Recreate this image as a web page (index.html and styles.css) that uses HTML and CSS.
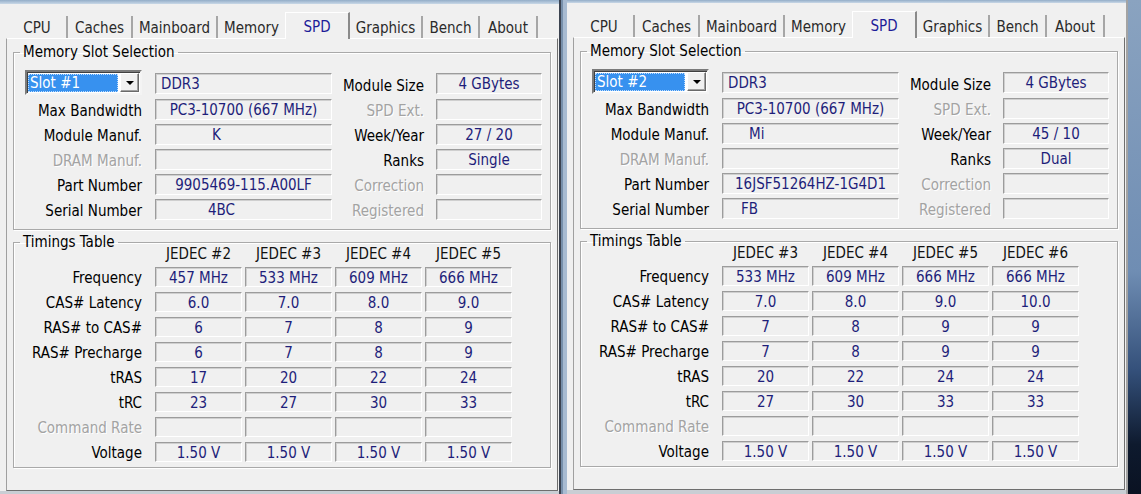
FILE: index.html
```html
<!DOCTYPE html>
<html>
<head>
<meta charset="utf-8">
<title>CPU-Z SPD</title>
<link rel="stylesheet" href="styles.css">
</head>
<body>
<div class="screen">
  <section class="win win-a">
    <div class="topframe"></div>
    <div class="tabs">
      <div class="tab t-cpu">CPU</div>
      <div class="tab t-caches">Caches</div>
      <div class="tab t-main">Mainboard</div>
      <div class="tab t-mem">Memory</div>
      <div class="tab t-spd active">SPD</div>
      <div class="tab t-gfx">Graphics</div>
      <div class="tab t-bench">Bench</div>
      <div class="tab t-about">About</div>
    </div>
    <div class="panel">
      <fieldset class="group g-slot">
        <legend>Memory Slot Selection</legend>
        <div class="slot-grid">
          <div class="combo"><span class="combo-sel">Slot #1</span><span class="combo-btn"><span class="tri"></span></span></div>
          <div class="field lft">DDR3</div>
          <div class="lab low">Module Size</div>
          <div class="field">4 GBytes</div>

          <div class="lab">Max Bandwidth</div>
          <div class="field">PC3-10700 (667 MHz)</div>
          <div class="lab dis">SPD Ext.</div>
          <div class="field"></div>

          <div class="lab">Module Manuf.</div>
          <div class="field lft ind-k">K</div>
          <div class="lab">Week/Year</div>
          <div class="field">27 / 20</div>

          <div class="lab dis">DRAM Manuf.</div>
          <div class="field"></div>
          <div class="lab">Ranks</div>
          <div class="field">Single</div>

          <div class="lab">Part Number</div>
          <div class="field">9905469-115.A00LF</div>
          <div class="lab dis">Correction</div>
          <div class="field"></div>

          <div class="lab">Serial Number</div>
          <div class="field lft ind-4bc">4BC</div>
          <div class="lab dis">Registered</div>
          <div class="field"></div>
        </div>
      </fieldset>
      <fieldset class="group g-tim">
        <legend>Timings Table</legend>
        <div class="tim-grid">
          <div class="hd"></div><div class="hd">JEDEC #2</div><div class="hd">JEDEC #3</div><div class="hd">JEDEC #4</div><div class="hd">JEDEC #5</div>
          <div class="lab">Frequency</div><div class="field">457 MHz</div><div class="field">533 MHz</div><div class="field">609 MHz</div><div class="field">666 MHz</div>
          <div class="lab">CAS# Latency</div><div class="field">6.0</div><div class="field">7.0</div><div class="field">8.0</div><div class="field">9.0</div>
          <div class="lab">RAS# to CAS#</div><div class="field">6</div><div class="field">7</div><div class="field">8</div><div class="field">9</div>
          <div class="lab">RAS# Precharge</div><div class="field">6</div><div class="field">7</div><div class="field">8</div><div class="field">9</div>
          <div class="lab">tRAS</div><div class="field">17</div><div class="field">20</div><div class="field">22</div><div class="field">24</div>
          <div class="lab">tRC</div><div class="field">23</div><div class="field">27</div><div class="field">30</div><div class="field">33</div>
          <div class="lab dis">Command Rate</div><div class="field"></div><div class="field"></div><div class="field"></div><div class="field"></div>
          <div class="lab">Voltage</div><div class="field">1.50 V</div><div class="field">1.50 V</div><div class="field">1.50 V</div><div class="field">1.50 V</div>
        </div>
      </fieldset>
    </div>
    <div class="bottomframe"></div>
  </section>

  <div class="midframe"></div>

  <section class="win win-b">
    <div class="topframe"></div>
    <div class="tabs">
      <div class="tab t-cpu">CPU</div>
      <div class="tab t-caches">Caches</div>
      <div class="tab t-main">Mainboard</div>
      <div class="tab t-mem">Memory</div>
      <div class="tab t-spd active">SPD</div>
      <div class="tab t-gfx">Graphics</div>
      <div class="tab t-bench">Bench</div>
      <div class="tab t-about">About</div>
    </div>
    <div class="panel">
      <fieldset class="group g-slot">
        <legend>Memory Slot Selection</legend>
        <div class="slot-grid">
          <div class="combo"><span class="combo-sel">Slot #2</span><span class="combo-btn"><span class="tri"></span></span></div>
          <div class="field lft">DDR3</div>
          <div class="lab low">Module Size</div>
          <div class="field">4 GBytes</div>

          <div class="lab">Max Bandwidth</div>
          <div class="field">PC3-10700 (667 MHz)</div>
          <div class="lab dis">SPD Ext.</div>
          <div class="field"></div>

          <div class="lab">Module Manuf.</div>
          <div class="field lft ind-mi">Mi</div>
          <div class="lab">Week/Year</div>
          <div class="field">45 / 10</div>

          <div class="lab dis">DRAM Manuf.</div>
          <div class="field"></div>
          <div class="lab">Ranks</div>
          <div class="field">Dual</div>

          <div class="lab">Part Number</div>
          <div class="field">16JSF51264HZ-1G4D1</div>
          <div class="lab dis">Correction</div>
          <div class="field"></div>

          <div class="lab">Serial Number</div>
          <div class="field lft ind-fb">FB</div>
          <div class="lab dis">Registered</div>
          <div class="field"></div>
        </div>
      </fieldset>
      <fieldset class="group g-tim">
        <legend>Timings Table</legend>
        <div class="tim-grid">
          <div class="hd"></div><div class="hd">JEDEC #3</div><div class="hd">JEDEC #4</div><div class="hd">JEDEC #5</div><div class="hd">JEDEC #6</div>
          <div class="lab">Frequency</div><div class="field">533 MHz</div><div class="field">609 MHz</div><div class="field">666 MHz</div><div class="field">666 MHz</div>
          <div class="lab">CAS# Latency</div><div class="field">7.0</div><div class="field">8.0</div><div class="field">9.0</div><div class="field">10.0</div>
          <div class="lab">RAS# to CAS#</div><div class="field">7</div><div class="field">8</div><div class="field">9</div><div class="field">9</div>
          <div class="lab">RAS# Precharge</div><div class="field">7</div><div class="field">8</div><div class="field">9</div><div class="field">9</div>
          <div class="lab">tRAS</div><div class="field">20</div><div class="field">22</div><div class="field">24</div><div class="field">24</div>
          <div class="lab">tRC</div><div class="field">27</div><div class="field">30</div><div class="field">33</div><div class="field">33</div>
          <div class="lab dis">Command Rate</div><div class="field"></div><div class="field"></div><div class="field"></div><div class="field"></div>
          <div class="lab">Voltage</div><div class="field">1.50 V</div><div class="field">1.50 V</div><div class="field">1.50 V</div><div class="field">1.50 V</div>
        </div>
      </fieldset>
    </div>
    <div class="bottomframe"></div>
  </section>

  <div class="rightframe"></div>
</div>
</body>
</html>
```

FILE: styles.css
```css
* { box-sizing: border-box; }

html, body {
  margin: 0;
  padding: 0;
  width: 1141px;
  height: 494px;
  overflow: hidden;
  background: #f0f0f0;
}

body {
  font-family: "DejaVu Sans Condensed", "DejaVu Sans", sans-serif;
  font-stretch: condensed;
  font-size: 15px;
  color: #000;
}

.screen {
  display: flex;
  width: 1141px;
  height: 494px;
}

.win {
  width: 559px;
  height: 494px;
  background: #f0f0f0;
  padding: 0 1px 0 6px;
  display: flex;
  flex-direction: column;
}

.topframe {
  height: 4px;
  margin: 0 -1px 0 -6px;
  background: linear-gradient(#93adc8, #c9d8e7);
}

.win-b .topframe { height: 3px; }

.bottomframe {
  flex: 1;
  margin: 0 -1px 0 -6px;
  background: #c9ced4;
}

.midframe {
  width: 8px;
  height: 494px;
  background: linear-gradient(to right, #3c4350 0 2px, #7890ab 2px 4px, #a8bbd1 4px);
}

.rightframe {
  width: 15px;
  height: 494px;
  background: linear-gradient(#8aa3c0 0%, #6f8db3 55%, #34507a 75%, #0e1a2e 90%, #0a1222 100%);
  border-left: 2px solid #a3a3a3;
}

/* ---------- tabs ---------- */
.tabs {
  display: flex;
  align-items: flex-end;
  height: 34px;
  padding: 8px 0 0 2px;
}

.tab {
  height: 22px;
  line-height: 20px;
  padding-top: 2px;
  text-align: center;
  color: #2a2a2a;
  border-right: 2px solid #a6a6a6;
}

.tab.active {
  height: 27px;
  line-height: 24px;
  padding-top: 2px;
  color: #1c1c98;
  border-top: 1px solid #fff;
  border-left: 1px solid #fff;
  border-right: 2px solid #8a8a8a;
  margin-bottom: -1px;
  background: #f0f0f0;
  position: relative;
  z-index: 1;
}

.t-cpu { width: 60px; }
.t-caches { width: 65px; }
.t-main { width: 85px; }
.t-mem { width: 67px; border-right: none; }
.t-spd { width: 65px; }
.t-gfx { width: 73px; }
.t-bench { width: 57px; }
.t-about { width: 58px; }

/* ---------- panel ---------- */
.panel {
  width: 552px;
  height: 453px;
  border-top: 1px solid #fff;
  border-left: 1px solid #a0a0a0;
  border-right: 1px solid #6e6e6e;
  border-bottom: 1px solid #6e6e6e;
  padding: 0 6px;
}

.group {
  margin: 0;
  padding: 0;
  border: 1px solid #a9a9a9;
  box-shadow: inset 1px 1px 0 #fff, 1px 1px 0 #fff;
  min-width: 0;
}

.group legend {
  margin-left: 6px;
  padding: 0 3px;
  line-height: 14px;
  height: 14px;
}

.g-slot { margin-top: 6px; padding: 11px 0 9px 0; }
.g-tim { margin-top: 5px; padding: 0 0 5px 0; }

/* ---------- slot grid ---------- */
.slot-grid {
  display: grid;
  grid-template-columns: 141px 177px 104px 106px;
  grid-template-rows: 25px repeat(5, 21px);
  row-gap: 4px;
}

.lab {
  text-align: right;
  padding-right: 13px;
  white-space: nowrap;
  align-self: center;
  line-height: 18px;
  padding-top: 2px;
}

.slot-grid .lab:nth-child(4n+3) { padding-right: 12px; }

.lab.low { align-self: end; }

.lab.dis {
  color: #a3a3a3;
  text-shadow: 1px 1px 0 #fff;
}

.field {
  border-top: 1px solid #9c9c9c;
  border-left: 1px solid #9c9c9c;
  border-bottom: 1px solid #fff;
  border-right: 1px solid #fff;
  box-shadow: inset 1px 1px 0 #cfcfcf;
  color: #1e1e7a;
  text-align: center;
  white-space: nowrap;
  overflow: hidden;
  line-height: 19px;
  padding-top: 1px;
  height: 21px;
}

.slot-grid .field:nth-child(2) { align-self: center; margin-top: 1px; }
.slot-grid .field:nth-child(4) { align-self: center; margin-top: 1px; }

.field.lft { text-align: left; padding-left: 5px; }
.field.ind-k { padding-left: 56px; }
.field.ind-4bc { padding-left: 52px; }
.field.ind-mi { padding-left: 26px; }
.field.ind-fb { padding-left: 18px; }

/* ---------- combo ---------- */
.combo {
  margin-left: 11px;
  width: 117px;
  height: 25px;
  background: #fff;
  border-top: 2px solid #7a7a7a;
  border-left: 2px solid #7a7a7a;
  border-bottom: 2px solid #f4f4f4;
  border-right: 2px solid #f4f4f4;
  box-shadow: inset 1px 1px 0 #404040;
  display: flex;
  align-items: center;
  padding: 1px;
}

.combo-sel {
  width: 91px;
  height: 18px;
  line-height: 19px;
  background: #3791ef;
  color: #fff;
  padding-left: 2px;
  outline: 1px dotted #bcdcff;
  outline-offset: -1px;
}

.combo-btn {
  margin-left: 2px;
  width: 19px;
  height: 19px;
  background: #f0f0f0;
  border-top: 1px solid #fff;
  border-left: 1px solid #fff;
  border-right: 1px solid #6a6a6a;
  border-bottom: 1px solid #6a6a6a;
  box-shadow: inset -1px -1px 0 #a0a0a0;
  display: flex;
  align-items: center;
  justify-content: center;
}

.tri {
  width: 0;
  height: 0;
  border-left: 4px solid transparent;
  border-right: 4px solid transparent;
  border-top: 4px solid #000;
}

/* ---------- timings grid ---------- */
.tim-grid {
  display: grid;
  grid-template-columns: 138px repeat(4, 87px);
  column-gap: 3px;
  grid-template-rows: 16px repeat(8, 20px);
  row-gap: 5px;
  margin-top: -3px;
}

.tim-grid .hd {
  text-align: center;
  line-height: 16px;
  color: #111;
}

.tim-grid .lab { padding-right: 10px; }

.tim-grid .field {
  height: 20px;
  line-height: 18px;
  padding-top: 1px;
}
```
